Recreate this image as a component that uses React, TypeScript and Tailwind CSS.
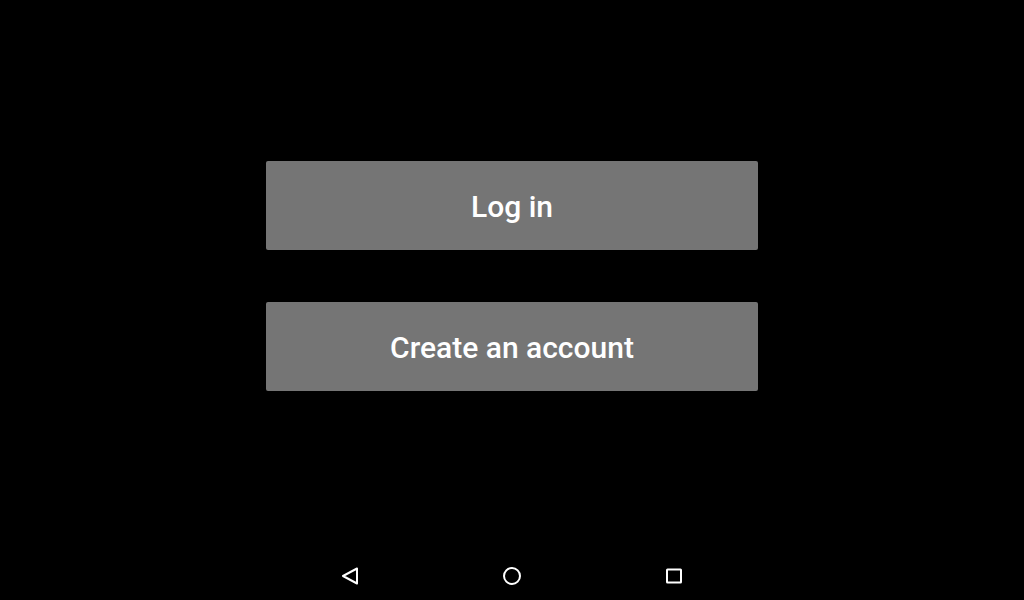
const NavBack = () => (
  <svg width="24" height="24" viewBox="0 0 24 24" fill="none" stroke="#ffffff" strokeWidth="2" strokeLinejoin="round">
    <path d="M19 4.5 L5 12 L19 19.5 Z" />
  </svg>
);

const NavHome = () => (
  <svg width="24" height="24" viewBox="0 0 24 24" fill="none" stroke="#ffffff" strokeWidth="2">
    <circle cx="12" cy="12" r="8" />
  </svg>
);

const NavRecent = () => (
  <svg width="24" height="24" viewBox="0 0 24 24" fill="none" stroke="#ffffff" strokeWidth="2">
    <rect x="5" y="5.5" width="14" height="13" rx="0.5" />
  </svg>
);

const App = () => {
  return (
    <div className="flex h-[600px] w-[1024px] flex-col bg-black" style={{ fontFamily: "Roboto, 'Noto Sans', sans-serif" }}>
      <div className="flex flex-1 flex-col items-center justify-center gap-[52px]">
        <button className="flex h-[89px] w-[492px] items-center justify-center rounded-[2px] bg-[#757575] pt-[2px] text-[30px] font-medium text-white">
          Log in
        </button>
        <button className="flex h-[89px] w-[492px] items-center justify-center rounded-[2px] bg-[#757575] pt-[2px] text-[30px] font-medium text-white">
          Create an account
        </button>
      </div>
      <div className="flex h-[48px] items-center justify-center">
        <div className="flex w-[162px] justify-center"><NavBack /></div>
        <div className="flex w-[162px] justify-center"><NavHome /></div>
        <div className="flex w-[162px] justify-center"><NavRecent /></div>
      </div>
    </div>
  );
};

export default App;
